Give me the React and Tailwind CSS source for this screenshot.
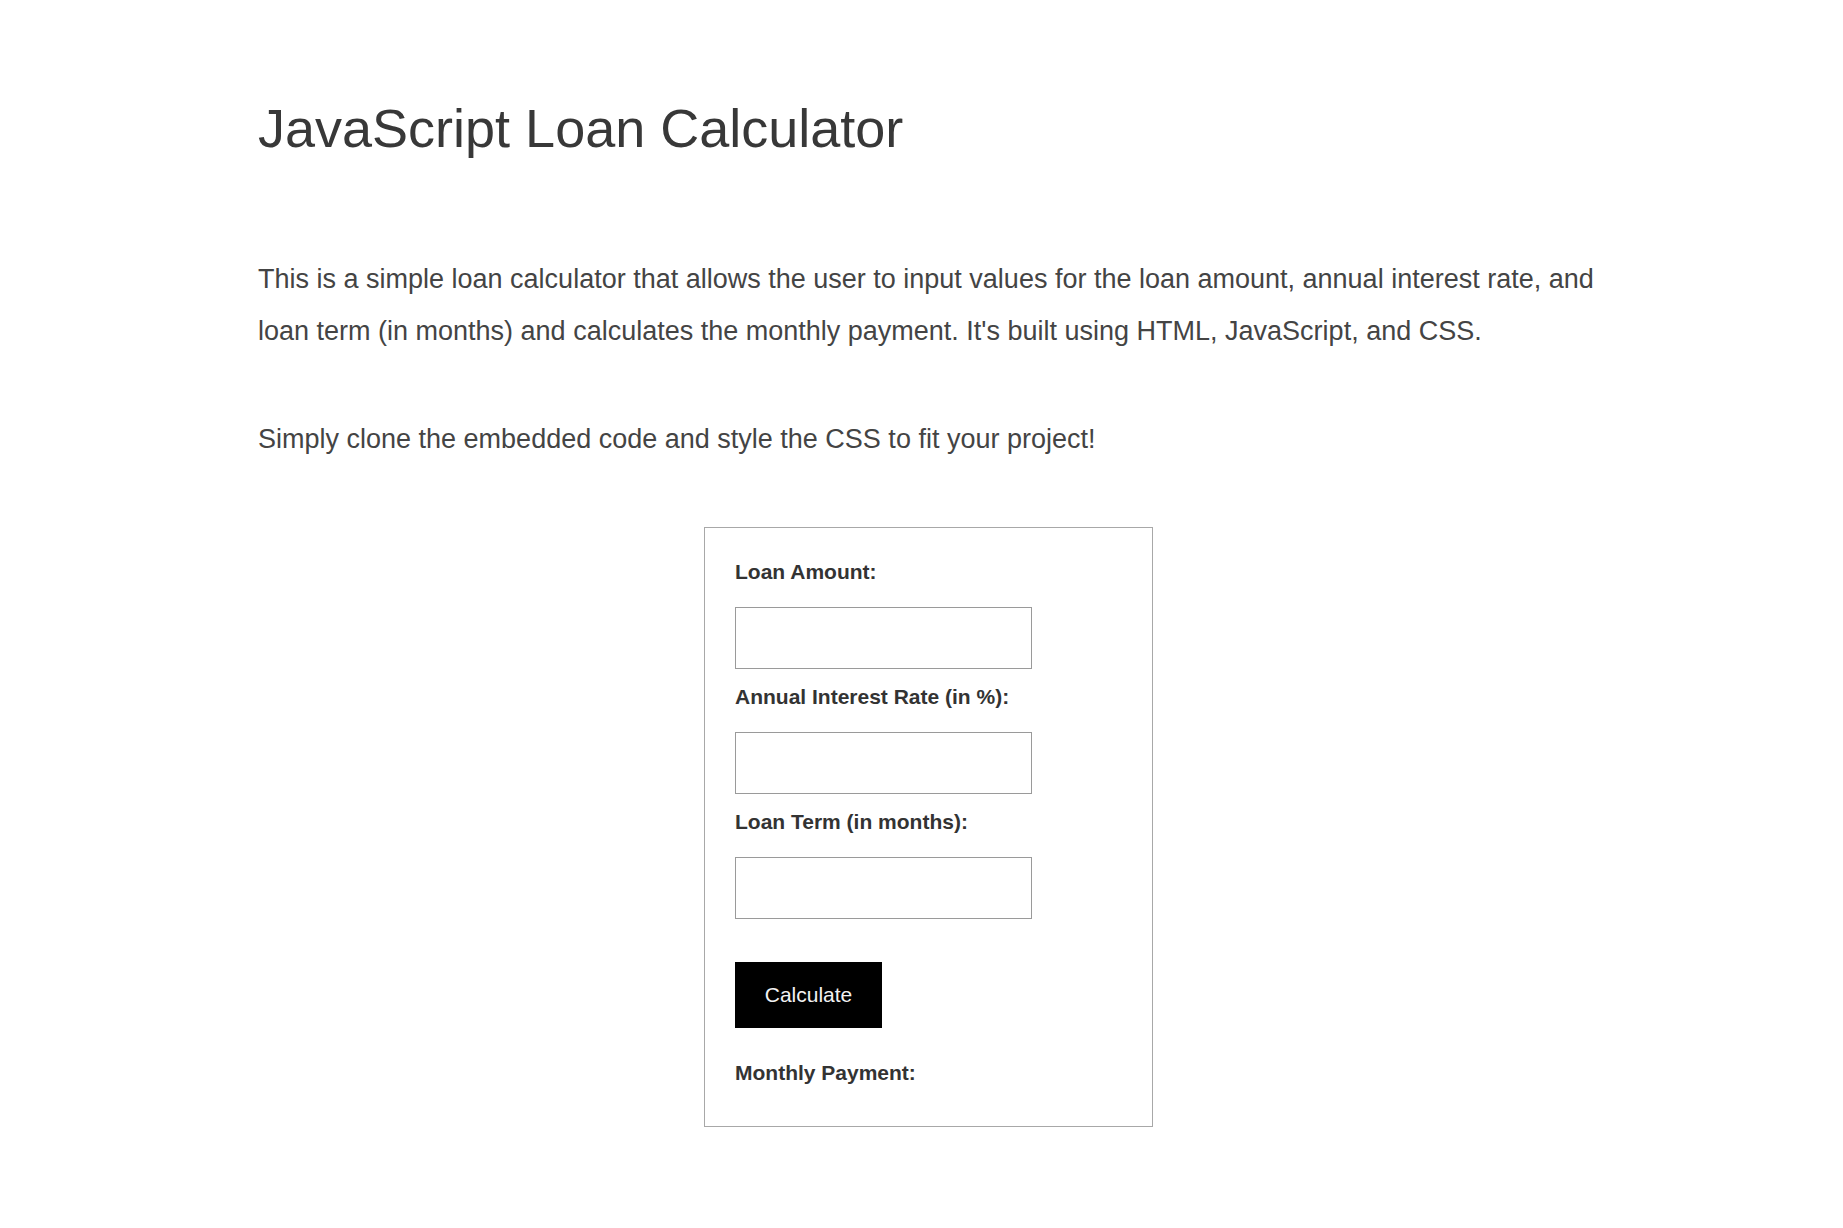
export default function App() {
  const labelCls =
    "block text-[21px] leading-[24px] font-bold text-[#333333]";
  const inputCls =
    "block w-[297px] h-[62px] border border-[#9a9a9a] bg-white outline-none";
  return (
    <div
      className="min-h-screen w-full bg-white pl-[258px] pt-[96px]"
      style={{ fontFamily: '"Liberation Sans", Arial, Helvetica, sans-serif' }}
    >
      <div className="w-[1370px]">
        <h1 className="text-[54px] leading-[64px] font-normal text-[#383838] m-0">
          JavaScript Loan Calculator
        </h1>
        <p className="mt-[93px] text-[27px] leading-[52px] text-[#444444]">
          This is a simple loan calculator that allows the user to input values
          for the loan amount, annual interest rate, and loan term (in months)
          and calculates the monthly payment. It's built using HTML,
          JavaScript, and CSS.
        </p>
        <p className="mt-[56px] text-[27px] leading-[52px] text-[#444444]">
          Simply clone the embedded code and style the CSS to fit your project!
        </p>
      </div>
      <div className="mt-[62px] ml-[446px] w-[449px] h-[600px] border border-[#a8a8a8] pl-[30px] pt-[32px]">
        <label className={labelCls}>Loan Amount:</label>
        <input type="text" className={`${inputCls} mt-[23px]`} />
        <label className={`${labelCls} mt-[16px]`}>
          Annual Interest Rate (in %):
        </label>
        <input type="text" className={`${inputCls} mt-[23px]`} />
        <label className={`${labelCls} mt-[16px]`}>Loan Term (in months):</label>
        <input type="text" className={`${inputCls} mt-[23px]`} />
        <button className="mt-[43px] block w-[147px] h-[66px] bg-black text-[#f2f2f2] text-[21px] leading-[24px] text-center">
          Calculate
        </button>
        <div className={`${labelCls} mt-[33px]`}>Monthly Payment:</div>
      </div>
      <div className="h-[100px]" />
    </div>
  );
}
